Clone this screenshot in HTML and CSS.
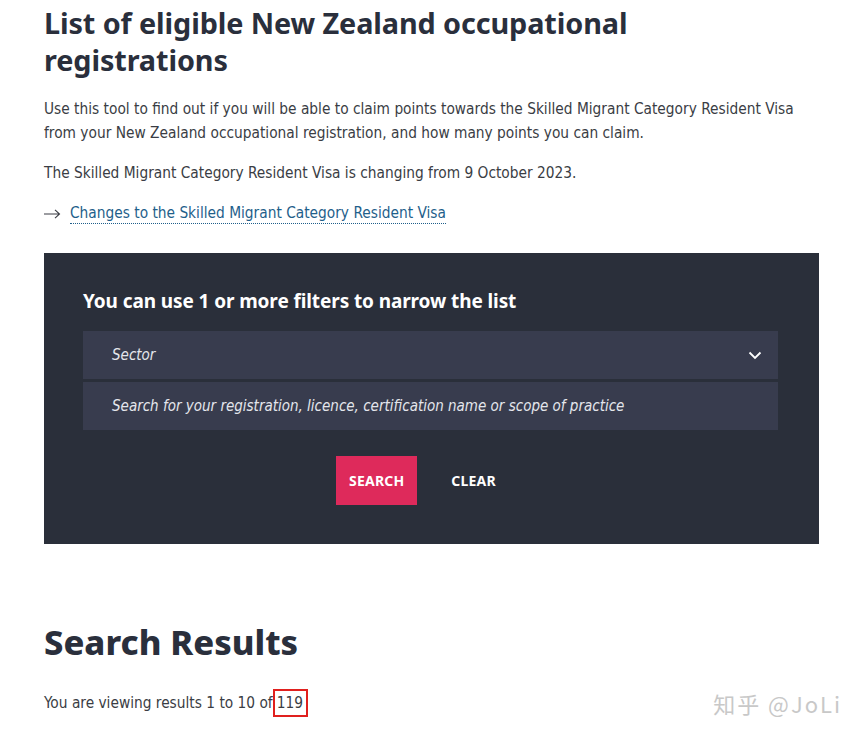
FILE: index.html
```html
<!DOCTYPE html>
<html lang="en">
<head>
<meta charset="utf-8">
<title>List of eligible New Zealand occupational registrations</title>
<link rel="stylesheet" href="styles.css">
</head>
<body>
<main class="page">
  <h1 class="title">List of eligible New Zealand occupational registrations</h1>
  <p class="text">Use this tool to find out if you will be able to claim points towards the Skilled Migrant Category Resident Visa from your New Zealand occupational registration, and how many points you can claim.</p>
  <p class="text">The Skilled Migrant Category Resident Visa is changing from 9 October 2023.</p>
  <p class="link-row"><svg class="arrow" width="17" height="10" viewBox="0 0 17 10"><path d="M0 5 H15.5 M11 0.8 L15.5 5 L11 9.2" fill="none" stroke="#3a3d44" stroke-width="1.1"/></svg><a class="link" href="#">Changes to the Skilled Migrant Category Resident Visa</a></p>

  <section class="filters">
    <h2 class="filters-title">You can use 1 or more filters to narrow the list</h2>
    <div class="field select-field">
      <span class="placeholder">Sector</span>
      <svg class="chevron" width="14" height="9" viewBox="0 0 14 9"><path d="M1.5 1.5 L7 7 L12.5 1.5" fill="none" stroke="#ffffff" stroke-width="1.8"/></svg>
    </div>
    <div class="field">
      <span class="placeholder">Search for your registration, licence, certification name or scope of practice</span>
    </div>
    <div class="actions">
      <button class="btn btn-primary">SEARCH</button>
      <button class="btn btn-plain">CLEAR</button>
    </div>
  </section>

  <h2 class="results-title">Search Results</h2>
  <div class="results-row">
    <p class="results-text">You are viewing results 1 to 10 of<span class="count">119</span></p>
    <span class="watermark">知乎 @JoLi</span>
  </div>
</main>
</body>
</html>
```

FILE: styles.css
```css
* { box-sizing: border-box; }
html, body { margin: 0; padding: 0; background: #ffffff; }
body {
  font-family: "DejaVu Sans Condensed", "Liberation Sans Narrow", "Liberation Sans", sans-serif;
  color: #2a2f3a;
}
.page {
  padding: 4px 46px 0 44px;
}
.title {
  font-family: "Noto Sans", "Open Sans", sans-serif;
  font-weight: 700;
  font-size: 28.8px;
  line-height: 37px;
  margin: 0 0 19px 0;
  color: #2a2f3c;
  max-width: 640px;
  letter-spacing: -0.1px;
}
.text {
  font-size: 15.3px;
  line-height: 24px;
  margin: 0 0 16px 0;
  color: #3a3d44;
  max-width: 775px;
}
.link-row {
  display: flex;
  align-items: center;
  gap: 9px;
  font-size: 15.3px;
  line-height: 24px;
  margin: 18px 0 29px 0;
}
.arrow { display: block; }
.link {
  color: #1f5f8b;
  text-decoration: none;
  border-bottom: 1px dotted #1f5f8b;
  line-height: 20px;
}
.filters {
  background: #2a2f3a;
  width: 775px;
  padding: 35px 41px 39px 39px;
}
.filters-title {
  font-family: "Noto Sans", "Open Sans", sans-serif;
  font-weight: 700;
  font-size: 19px;
  line-height: 26px;
  color: #ffffff;
  margin: 0 0 17px 0;
  letter-spacing: -0.1px;
}
.field {
  display: flex;
  align-items: center;
  justify-content: space-between;
  background: #383c4e;
  height: 48px;
  padding: 0 16px 0 29px;
  margin-bottom: 3px;
}
.placeholder {
  font-style: italic;
  font-size: 15px;
  color: #e4e6ec;
}
.chevron { display: block; }
.actions {
  display: flex;
  justify-content: center;
  align-items: center;
  gap: 34px;
  margin-top: 26px;
  padding-right: 29px;
}
.btn {
  font-family: "Noto Sans", "Open Sans", sans-serif;
  font-weight: 700;
  font-size: 14px;
  color: #ffffff;
  border: 0;
  letter-spacing: 0.2px;
}
.btn-primary {
  background: #de2a5b;
  width: 81px;
  height: 49px;
}
.btn-plain {
  background: transparent;
  padding: 0;
}
.results-title {
  font-family: "Noto Sans", "Open Sans", sans-serif;
  font-weight: 800;
  font-size: 34.5px;
  line-height: 40px;
  margin: 78px 0 25px 0;
  color: #2a2f3c;
}
.results-row {
  display: flex;
  justify-content: space-between;
  align-items: center;
}
.results-text {
  font-size: 15.3px;
  line-height: 24px;
  color: #3a3d44;
  margin: 0;
}
.count {
  display: inline-block;
  border: 2px solid #e0201e;
  padding: 2px 3px 2px 2px;
  line-height: 20px;
}
.watermark {
  font-family: "Noto Sans CJK SC", sans-serif;
  font-size: 22px;
  color: #c8c8c8;
  margin-right: -23px;
  letter-spacing: 2px;
}
```
